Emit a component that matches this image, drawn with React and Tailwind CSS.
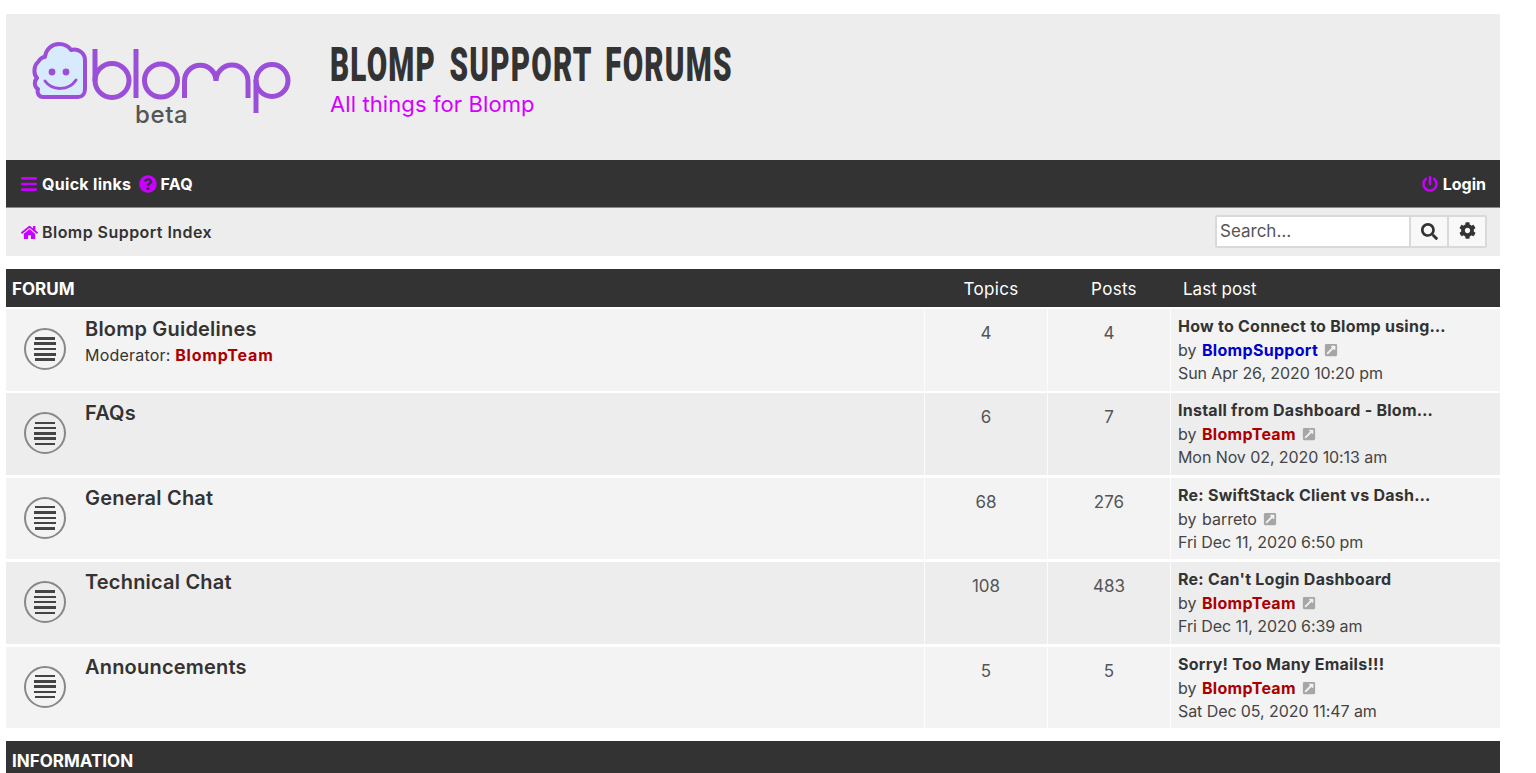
import { FaBars, FaQuestionCircle, FaHome, FaPowerOff, FaSearch, FaCog, FaExternalLinkSquareAlt } from 'react-icons/fa';

const forums = [
  { title: 'Blomp Guidelines', mod: 'BlompTeam', topics: 4, posts: 4, last: 'How to Connect to Blomp using…', by: 'BlompSupport', color: 'font-bold tracking-[0.3px] text-[#0000cc]', date: 'Sun Apr 26, 2020 10:20 pm' },
  { title: 'FAQs', topics: 6, posts: 7, last: 'Install from Dashboard - Blom…', by: 'BlompTeam', color: 'font-bold tracking-[0.3px] text-[#aa0000]', date: 'Mon Nov 02, 2020 10:13 am' },
  { title: 'General Chat', topics: 68, posts: 276, last: 'Re: SwiftStack Client vs Dash…', by: 'barreto', color: 'text-[#444]', date: 'Fri Dec 11, 2020 6:50 pm' },
  { title: 'Technical Chat', topics: 108, posts: 483, last: "Re: Can't Login Dashboard", by: 'BlompTeam', color: 'font-bold tracking-[0.3px] text-[#aa0000]', date: 'Fri Dec 11, 2020 6:39 am' },
  { title: 'Announcements', topics: 5, posts: 5, last: 'Sorry! Too Many Emails!!!', by: 'BlompTeam', color: 'font-bold tracking-[0.3px] text-[#aa0000]', date: 'Sat Dec 05, 2020 11:47 am' },
];

const BlompLogo = () => (
  <svg width="264" height="90" viewBox="0 0 264 90" className="shrink-0">
    <path
      d="M11 56 C6 56 5 51 6 48 C2 46 2 40 5 37 C1 33 2 24 6 21 C8 18 11 16 13 16 C14 8 20 3 27 3 C33 3 37 6 39 9 C46 7 53 12 53 19 L53 48 C53 53 50 56 46 56 Z"
      fill="#d8ebfd"
      stroke="#9b4fd8"
      strokeWidth="4"
      strokeLinejoin="round"
    />
    <circle cx="20" cy="31" r="3.4" fill="#9b4fd8" />
    <circle cx="34" cy="31" r="3.4" fill="#9b4fd8" />
    <path d="M13 40 C20 50 37 50 44 39" fill="none" stroke="#9b4fd8" strokeWidth="3" strokeLinecap="round" />
    <g fill="none" stroke="#9b4fd8" strokeWidth="5">
      <path d="M63 8 V40" />
      <circle cx="80" cy="39.5" r="17" />
      <path d="M104 8 V57" />
      <circle cx="129" cy="39.5" r="16.5" />
      <path d="M152.5 57 V40 A15.75 15.75 0 0 1 184 40 A16 16 0 0 1 216 40 V57" />
      <path d="M224 39 V72" />
      <circle cx="240" cy="39.5" r="16" />
    </g>
    <text x="103" y="82" fontSize="24" fontWeight="500" letterSpacing="0.6" fill="#555" fontFamily="Inter, sans-serif">beta</text>
  </svg>
);

const ForumRow = ({ forum, odd }) => (
  <div className={`flex h-[81.5px] ${odd ? 'bg-[#f3f3f3]' : 'bg-[#ededed]'}`}>
    <div className="flex-1 flex min-w-0 border-r border-white/80">
      <div className="w-[79px] shrink-0 flex pl-[18px] pt-[19px]">
        <div className="w-[42px] h-[42px] rounded-full border-2 border-[#888] flex flex-col items-center justify-center gap-[2.8px]">
          {[20, 22, 22, 22, 20].map((w, i) => (
            <span key={i} className="block h-[2.5px] bg-[#444]" style={{ width: w }} />
          ))}
        </div>
      </div>
      <div className="pt-[7px]">
        <div className="text-[20px] leading-[26px] font-semibold tracking-[0.2px] text-[#333]">{forum.title}</div>
        {forum.mod && (
          <div className="text-[16px] leading-[26px] tracking-[0.2px] text-[#333]">
            Moderator: <span className="font-bold tracking-[0.8px] text-[#aa0000]">{forum.mod}</span>
          </div>
        )}
      </div>
    </div>
    <div className="w-[123px] shrink-0 text-center text-[#555] text-[17px] pt-[12px] border-r border-white/80">{forum.topics}</div>
    <div className="w-[123px] shrink-0 text-center text-[#555] text-[17px] pt-[12px] border-r border-white/80">{forum.posts}</div>
    <div className="w-[329px] shrink-0 pl-[7px] pt-[5px] text-[16px] text-[#444]">
      <div className="leading-[24px] font-bold tracking-[0.25px] text-[#333]">{forum.last}</div>
      <div className="leading-[24px] flex items-center gap-[6px]">
        <span>
          by <span className={`ml-[1px] ${forum.color}`}>{forum.by}</span>
        </span>
        <FaExternalLinkSquareAlt className="text-[#a6a6a6] text-[14px]" />
      </div>
      <div className="leading-[22px] tracking-[-0.08px]">{forum.date}</div>
    </div>
  </div>
);

export default function App() {
  return (
    <div className="h-[773px] overflow-hidden bg-white pt-[14px] pl-[6px] pr-[36px] font-['Inter',sans-serif]">
      <div className="h-[146px] bg-[#ededed] flex pl-[26px] pt-[26px] gap-[13px]">
        <div className="pt-[1px]">
          <BlompLogo />
        </div>
        <div className="pl-[21px]">
          <div className="text-[49px] leading-[50px] font-black text-[#333] font-['Roboto',sans-serif] tracking-[2px] [word-spacing:8px] whitespace-nowrap origin-left scale-x-[0.605]">BLOMP SUPPORT FORUMS</div>
          <div className="text-[22px] leading-[28px] tracking-[0.1px] text-[#d400ff]">All things for Blomp</div>
        </div>
      </div>
      <div className="h-[48px] bg-[#333] border-b border-[#888] flex items-center justify-between pl-[14px] pr-[14px] text-white font-bold text-[16px]">
        <div className="flex items-center tracking-[0.3px]">
          <FaBars className="text-[#c800ff] text-[18px] mr-[4px]" />
          <span>Quick links</span>
          <FaQuestionCircle className="text-[#c800ff] text-[18px] ml-[8px] mr-[3px]" />
          <span>FAQ</span>
        </div>
        <div className="flex items-center">
          <FaPowerOff className="text-[#c800ff] text-[16px] mr-[5px]" />
          <span>Login</span>
        </div>
      </div>
      <div className="h-[48px] bg-[#ededed] flex items-center justify-between pl-[15px] pr-[13px]">
        <div className="flex items-center text-[16px] font-semibold tracking-[0.45px] text-[#333]">
          <FaHome className="text-[#c800ff] text-[17px] mr-[4px]" />
          <span>Blomp Support Index</span>
        </div>
        <div className="flex h-[33px] w-[272px] -mt-[1px] border-2 border-[#d9d9d9] rounded-[2px] bg-[#f8f8f8] text-[#333]">
          <div className="flex-1 bg-white border-r-2 border-[#d9d9d9] pl-[3px] flex items-center text-[17px] text-[#555]">Search…</div>
          <div className="w-[38px] flex items-center justify-center border-r-2 border-[#d9d9d9]"><FaSearch className="text-[17px]" /></div>
          <div className="w-[36px] flex items-center justify-center pb-[2px]"><FaCog className="text-[17px]" /></div>
        </div>
      </div>
      <div className="h-[38px] mt-[13px] pt-[3px] bg-[#333] flex items-center text-white text-[17px]">
        <div className="flex-1 pl-[6px] font-bold">FORUM</div>
        <div className="w-[123px] text-center pl-[9px] tracking-[0.3px]">Topics</div>
        <div className="w-[123px] text-center pl-[9px] tracking-[0.3px]">Posts</div>
        <div className="w-[329px] pl-[12px]">Last post</div>
      </div>
      <div className="flex flex-col gap-[2.9px] pt-[2px]">
        {forums.map((forum, i) => (
          <ForumRow key={forum.title} forum={forum} odd={i % 2 === 0} />
        ))}
      </div>
      <div className="h-[39px] mt-[13px] pt-[2px] bg-[#333] flex items-center text-white text-[17px] font-bold pl-[6px]">INFORMATION</div>
    </div>
  );
}
